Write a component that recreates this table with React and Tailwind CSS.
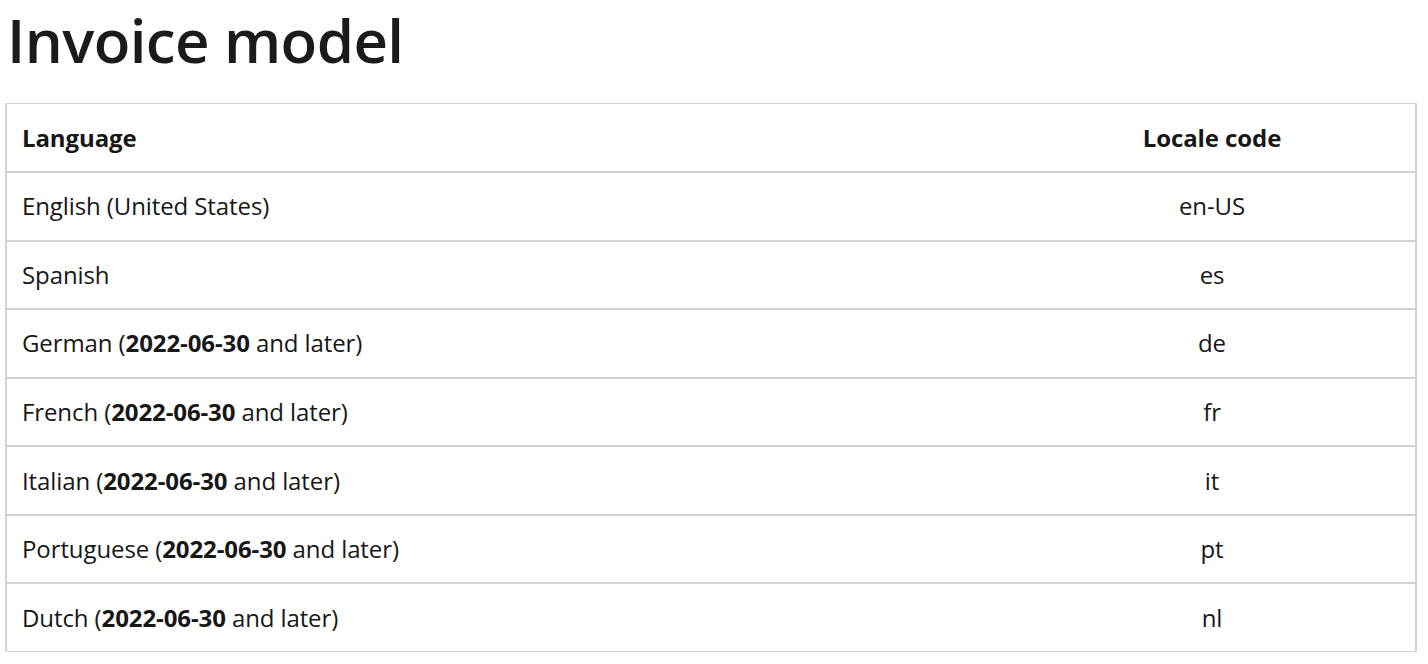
import React from "react";

const rows = [
  ["English (United States)", null, "en-US"],
  ["Spanish", null, "es"],
  ["German", "2022-06-30", "de"],
  ["French", "2022-06-30", "fr"],
  ["Italian", "2022-06-30", "it"],
  ["Portuguese", "2022-06-30", "pt"],
  ["Dutch", "2022-06-30", "nl"],
];

export default function App() {
  return (
    <div
      className="bg-white w-[1428px] h-[664px] overflow-hidden text-[#171717]"
      style={{ fontFamily: '"Open Sans", "Noto Sans", sans-serif' }}
    >
      <h1 className="text-[60px] leading-[80px] font-semibold pl-[7px] pt-[0px] text-[#1b1b1b] tracking-[-0.6px] whitespace-nowrap">
        Invoice model
      </h1>
      <div className="ml-[5px] mt-[23px] w-[1412px] border-l-2 border-r-2 border-t border-b border-[#d2d2d2] text-[24px] tracking-[-0.1px]">
        <div className="flex items-center h-[69px] border-b-2 border-[#d2d2d2] font-bold">
          <div className="w-[1002px] pl-[15px]">Language</div>
          <div className="flex-1 text-center">Locale code</div>
        </div>
        {rows.map(([lang, date, code], i) => (
          <div
            key={code}
            className={
              i === rows.length - 1
                ? "flex items-center h-[67px]"
                : "flex items-center h-[68.57px] border-b-2 border-[#d2d2d2]"
            }
          >
            <div className="w-[1002px] pl-[15px] whitespace-nowrap">
              {date ? (
                <>
                  {lang} (<span className="font-bold">{date}</span> and later)
                </>
              ) : (
                lang
              )}
            </div>
            <div className="flex-1 text-center">{code}</div>
          </div>
        ))}
      </div>
    </div>
  );
}
